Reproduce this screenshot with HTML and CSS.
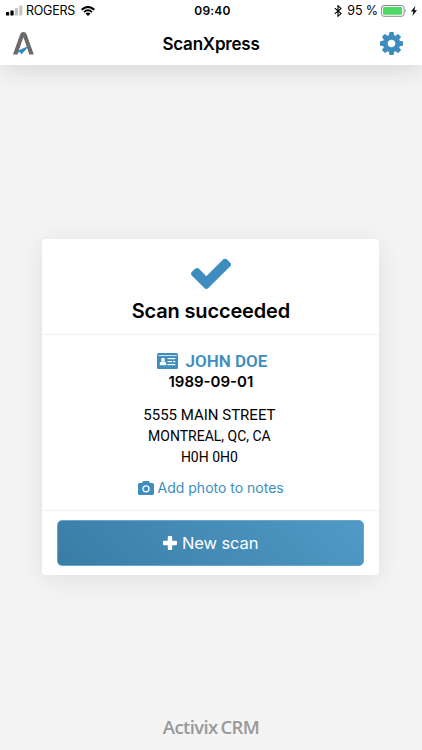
FILE: index.html
```html
<!DOCTYPE html>
<html lang="en">
<head>
    <meta charset="UTF-8">
    <meta name="viewport" content="width=device-width, initial-scale=1.0">
    <title>ScanXpress</title>
    <link rel="stylesheet" href="styles.css">
</head>
<body>
    <div class="app">
        <header class="header">
            <div class="status-bar">
                <div class="status-left">
                    <svg class="signal" viewBox="0 0 17 11">
                        <rect x="0" y="7" width="3.2" height="3.6" rx=".7"/>
                        <rect x="4.4" y="5.4" width="3.2" height="5.2" rx=".7"/>
                        <rect x="8.8" y="3" width="3.2" height="7.6" rx=".7" fill="#c4c4c4"/>
                        <rect x="13.2" y=".5" width="3.2" height="10.1" rx=".7" fill="#c4c4c4"/>
                    </svg>
                    <span class="carrier">ROGERS</span>
                    <svg class="wifi" viewBox="0 0 14 10">
                        <path d="M.6 3.7Q7-1.9 13.4 3.7M2.9 6.1Q7 2.6 11.1 6.1" fill="none" stroke="#000" stroke-width="1.9"/>
                        <path d="M4.5 7.5Q7 5.5 9.5 7.5L7 10z"/>
                    </svg>
                </div>
                <span class="time">09:40</span>
                <div class="status-right">
                    <svg class="bluetooth" viewBox="0 0 8 12">
                        <path d="M.8 3.2L7 8.6 4 11.3V.7L7 3.4.8 8.8" fill="none" stroke="#000" stroke-width="1.1"/>
                    </svg>
                    <span class="percent">95 %</span>
                    <svg class="battery" viewBox="0 0 26 12">
                        <rect x=".5" y=".5" width="22.6" height="10.8" rx="2.5" fill="#fff" stroke="#8b8b8b"/>
                        <rect x="2" y="2" width="19" height="7.8" rx="1" fill="#4cd964"/>
                        <path d="M24.3 4q1.5 1.9 0 3.8z" fill="#8b8b8b"/>
                    </svg>
                    <svg class="bolt" viewBox="0 0 6 10">
                        <path d="M4.4 0L0 5.6h2.5L1.4 10 6 4.2H3.4z"/>
                    </svg>
                </div>
            </div>
            <div class="nav-bar">
                <svg class="logo" viewBox="0 0 21 23">
                    <path d="M0 22.6L7.1 2.4Q8 0 10.4 0T13.7 2.4L20.8 22.6H16.2L10.4 5.4 4.6 22.6z" fill="#6d6a69"/>
                    <path d="M10.4 5.4L16.2 22.6H4.6z" fill="#fff"/>
                    <path d="M15.9 13.7L4.8 18.8 4.1 21.2 7 19.8 8 22.5 11.6 18.9z" fill="#318bc0"/>
                </svg>
                <h1 class="title">ScanXpress</h1>
                <svg class="cog" viewBox="128 128 1536 1536">
                    <path d="M1152 896q0-106-75-181t-181-75-181 75-75 181 75 181 181 75 181-75 75-181zm512-109v222q0 12-8 23t-20 13l-185 28q-19 54-39 91 35 50 107 138 10 12 10 25t-9 23q-27 37-99 108t-94 71q-12 0-26-9l-138-108q-44 23-91 38-16 136-29 186-7 28-36 28h-222q-14 0-24.5-8.5t-11.5-21.5l-28-184q-49-16-90-37l-141 107q-10 9-25 9-14 0-25-11-126-114-165-168-7-10-7-23 0-12 8-23 15-21 51-66.5t54-70.5q-27-50-41-99l-183-27q-13-2-21-12.5t-8-23.5v-222q0-12 8-23t19-13l186-28q14-46 39-92-40-57-107-138-10-12-10-24 0-10 9-23 26-36 98.5-107.5t94.5-71.5q13 0 26 10l138 107q44-23 91-38 16-136 29-186 7-28 36-28h222q14 0 24.5 8.5t11.5 21.5l28 184q49 16 90 37l142-107q9-9 24-9 13 0 25 10 129 119 165 170 7 8 7 22 0 12-8 23-15 21-51 66.5t-54 70.5q26 50 41 98l183 28q13 2 21 12.5t8 23.5z"/>
                </svg>
            </div>
        </header>

        <main class="content">
            <div class="card">
                <div class="card-header">
                    <svg class="check" viewBox="121 270 1550 1252" preserveAspectRatio="none">
                        <path d="M1671 566q0 40-28 68l-724 724-136 136q-28 28-68 28t-68-28l-136-136-362-362q-28-28-28-68t28-68l136-136q28-28 68-28t68 28l294 295 656-657q28-28 68-28t68 28l136 136q28 28 28 68z"/>
                    </svg>
                    <h2 class="result">Scan succeeded</h2>
                </div>
                <div class="card-body">
                    <div class="name-row">
                        <svg class="id-card" viewBox="0 0 21 16">
                            <rect x="0" y="0" width="21" height="16" rx="1.6"/>
                            <path d="M1.3 2.6h18.4" stroke="#fff" stroke-width=".8"/>
                            <g fill="#fff">
                                <circle cx="6" cy="6.7" r="2"/>
                                <path d="M2.7 12.3V11q0-2.5 2-2.5 1.3.9 2.6 0 2 0 2 2.5v1.3z"/>
                                <rect x="10.5" y="5" width="7.8" height="1.2"/>
                                <rect x="10.5" y="8" width="4.5" height="1.2"/>
                                <rect x="16" y="8" width="2.3" height="1.2"/>
                                <rect x="10.5" y="11" width="7.8" height="1.2"/>
                            </g>
                        </svg>
                        <span class="name">JOHN DOE</span>
                    </div>
                    <div class="birthdate">1989-09-01</div>
                    <div class="address">
                        <div class="street">5555 MAIN STREET</div>
                        <div class="city">MONTREAL, QC, CA</div>
                        <div class="postal">H0H 0H0</div>
                    </div>
                    <a class="add-photo">
                        <svg class="camera" viewBox="0 0 16 14">
                            <path d="M1.5 2H4l.6-1.2Q5 0 6 0h4q1 0 1.4.8L12 2h2.5Q16 2 16 3.5v9q0 1.5-1.5 1.5h-13Q0 14 0 12.5v-9Q0 2 1.5 2z"/>
                            <circle cx="8" cy="7.8" r="3" fill="none" stroke="#fff" stroke-width="1.3"/>
                        </svg>
                        <span>Add photo to notes</span>
                    </a>
                </div>
                <div class="card-footer">
                    <button class="btn">
                        <svg class="plus" viewBox="0 0 14 14">
                            <path d="M5.7 0h2.6q.9 0 .9.9v3.9h3.9q.9 0 .9.9v2.6q0 .9-.9.9H9.2v3.9q0 .9-.9.9H5.7q-.9 0-.9-.9V9.2H.9Q0 9.2 0 8.3V5.7q0-.9.9-.9h3.9V.9q0-.9.9-.9z"/>
                        </svg>
                        <span>New scan</span>
                    </button>
                </div>
            </div>
        </main>

        <footer class="footer"><span>Activix</span> <span class="crm">CRM</span></footer>
    </div>
</body>
</html>
```

FILE: styles.css
```css
* {
    box-sizing: border-box;
}

body {
    margin: 0;
    background: #f4f4f4;
    color: #000;
    font-family: Inter, "Liberation Sans", sans-serif;
}

svg {
    display: block;
    flex: none;
}

.app {
    height: 750px;
    display: flex;
    flex-direction: column;
    overflow: hidden;
    white-space: nowrap;
}

.header {
    height: 65.4px;
    flex: none;
    background: #fff;
    box-shadow: 0 5px 26px rgba(0, 0, 0, 0.12);
}

.status-bar {
    height: 21px;
    padding: 0 5px 0 6px;
    display: grid;
    grid-template-columns: 1fr auto 1fr;
    align-items: center;
    font-size: 12.5px;
    line-height: 21px;
}

.status-left,
.status-right {
    display: flex;
    align-items: center;
}

.status-right {
    justify-content: flex-end;
}

.signal {
    width: 17px;
    height: 11px;
}

.carrier {
    margin-left: 3px;
    letter-spacing: -0.25px;
}

.wifi {
    width: 14px;
    height: 10px;
    margin-left: 6px;
}

.time {
    margin-left: 2px;
    font-size: 12px;
    font-weight: 600;
    letter-spacing: 0.2px;
}

.percent {
    letter-spacing: -0.1px;
}

.bluetooth {
    width: 8px;
    height: 12px;
    margin-right: 5px;
}

.battery {
    width: 26px;
    height: 12px;
    margin-left: 3px;
}

.bolt {
    width: 6px;
    height: 10px;
    margin-left: 4px;
}

.nav-bar {
    height: 44px;
    padding: 0 19px 0 13px;
    display: grid;
    grid-template-columns: 1fr auto 1fr;
    align-items: center;
}

.logo {
    width: 21px;
    height: 23px;
}

.title {
    margin: 1px 0 0 6px;
    font-size: 17px;
    font-weight: 600;
    line-height: 22px;
    letter-spacing: -0.2px;
}

.cog {
    width: 23px;
    height: 23px;
    justify-self: end;
    fill: #3d8ebf;
}

.content {
    flex: 1;
    padding: 174px 42.6px 0 42.4px;
}

.card {
    height: 336px;
    background: #fff;
    border-radius: 4px;
    box-shadow: 0 4px 26px rgba(0, 0, 0, 0.09);
}

.card-header {
    height: 96px;
    padding-top: 18px;
    display: flex;
    flex-direction: column;
    align-items: center;
    border-bottom: 1px solid #f1f1f1;
}

.check {
    width: 40px;
    height: 32px;
    fill: #3d8ebf;
}

.result {
    margin: 9px 0 0;
    font-size: 20px;
    font-weight: 600;
    line-height: 26px;
    letter-spacing: -0.15px;
}

.card-body {
    height: 175px;
    padding-top: 15px;
    display: flex;
    flex-direction: column;
    align-items: center;
    font-family: Roboto, "Liberation Sans", sans-serif;
}

.name-row {
    display: flex;
    align-items: center;
    gap: 7px;
    margin-left: 3px;
    color: #3d8ebf;
}

.id-card {
    width: 21px;
    height: 16px;
    fill: #3d8ebf;
}

.name {
    font-size: 17px;
    font-weight: 600;
    line-height: 22px;
}

.birthdate {
    font-family: Inter, sans-serif;
    font-size: 15px;
    font-weight: 600;
    line-height: 20px;
}

.address {
    margin: 13px 3px 0 0;
    text-align: center;
    font-size: 14px;
    line-height: 20.5px;
}

.street {
    font-size: 15px;
    line-height: 21px;
}

.add-photo {
    margin-top: 11px;
    display: flex;
    align-items: center;
    gap: 3.5px;
    color: #3d8ebf;
    font-family: Inter, sans-serif;
    font-size: 14px;
    line-height: 20px;
}

.camera {
    width: 16px;
    height: 14px;
    fill: #3d8ebf;
}

.card-footer {
    padding: 9px 15px 0;
    border-top: 1px solid #f1f1f1;
}

.btn {
    width: 100%;
    height: 45.5px;
    padding: 0 0 1px;
    display: flex;
    justify-content: center;
    align-items: center;
    gap: 4.5px;
    border: 1px solid #69a6ca;
    border-radius: 5px;
    background: linear-gradient(45deg, #397da6, #509ac7) border-box;
    color: #fff;
    font-family: Inter, sans-serif;
    font-size: 16.5px;
    letter-spacing: -0.1px;
}

.plus {
    width: 14px;
    height: 14px;
    fill: #fff;
}

.footer {
    height: 45px;
    flex: none;
    padding-top: 10px;
    text-align: center;
    color: #999;
    font-family: "Open Sans", sans-serif;
    font-size: 18.5px;
    font-weight: 600;
    line-height: 24px;
    letter-spacing: -0.6px;
    word-spacing: -1.5px;
}
```
